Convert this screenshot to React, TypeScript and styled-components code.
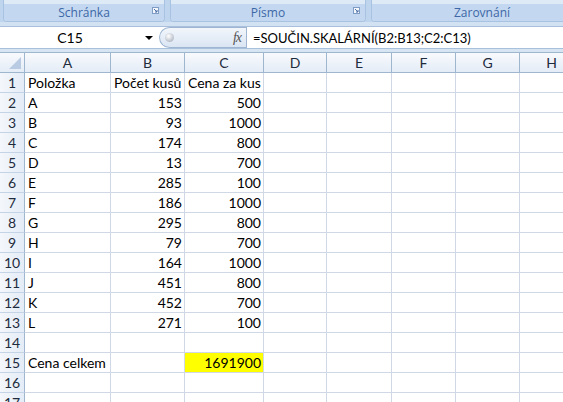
import React from "react";
import styled, { createGlobalStyle } from "styled-components";

const GlobalStyle = createGlobalStyle`
  body {
    margin: 0;
    background: #ffffff;
    font-family: Lato, "Open Sans", "Liberation Sans", sans-serif;
    overflow: hidden;
  }
`;

const columns = [
  { name: "A", width: 86 },
  { name: "B", width: 74 },
  { name: "C", width: 79 },
  { name: "D", width: 63 },
  { name: "E", width: 65 },
  { name: "F", width: 64 },
  { name: "G", width: 64 },
  { name: "H", width: 64 },
];

type Cell = { value: string; num?: boolean; highlight?: boolean };

const data: Record<number, Cell[]> = {
  1: [{ value: "Položka" }, { value: "Počet kusů" }, { value: "Cena za kus" }],
  2: [{ value: "A" }, { value: "153", num: true }, { value: "500", num: true }],
  3: [{ value: "B" }, { value: "93", num: true }, { value: "1000", num: true }],
  4: [{ value: "C" }, { value: "174", num: true }, { value: "800", num: true }],
  5: [{ value: "D" }, { value: "13", num: true }, { value: "700", num: true }],
  6: [{ value: "E" }, { value: "285", num: true }, { value: "100", num: true }],
  7: [{ value: "F" }, { value: "186", num: true }, { value: "1000", num: true }],
  8: [{ value: "G" }, { value: "295", num: true }, { value: "800", num: true }],
  9: [{ value: "H" }, { value: "79", num: true }, { value: "700", num: true }],
  10: [{ value: "I" }, { value: "164", num: true }, { value: "1000", num: true }],
  11: [{ value: "J" }, { value: "451", num: true }, { value: "800", num: true }],
  12: [{ value: "K" }, { value: "452", num: true }, { value: "700", num: true }],
  13: [{ value: "L" }, { value: "271", num: true }, { value: "100", num: true }],
  15: [
    { value: "Cena celkem" },
    { value: "" },
    { value: "1691900", num: true, highlight: true },
  ],
};

const groups = [
  { label: "Schránka", width: 160, launcher: true },
  { label: "Písmo", width: 194, launcher: true },
  { label: "Zarovnání", width: 220, launcher: false },
];

const App = () => {
  const rows = Array.from({ length: 17 }, (_, i) => i + 1);

  return (
    <>
      <GlobalStyle />
      <Ribbon>
        {groups.map((g) => (
          <Group key={g.label} style={{ width: g.width }}>
            <GroupBody />
            <GroupLabel>
              <span>{g.label}</span>
              {g.launcher && (
                <Launcher>
                  <svg width="7" height="7" viewBox="0 0 7 7">
                    <rect x="0.5" y="0.5" width="6" height="6" fill="#f4f7fb" stroke="#7f9cc4" />
                    <path d="M2 2 L5 5 M5 3 L5 5 L3 5" stroke="#4a6ea5" fill="none" />
                  </svg>
                </Launcher>
              )}
            </GroupLabel>
          </Group>
        ))}
      </Ribbon>
      <RibbonEdge />
      <FormulaBar>
        <NameBox>
          <NameText>C15</NameText>
          <DropArrow />
        </NameBox>
        <FxPill>
          <Knob />
          <FxText>fx</FxText>
        </FxPill>
        <FormulaInput>=SOUČIN.SKALÁRNÍ(B2:B13;C2:C13)</FormulaInput>
      </FormulaBar>
      <BarGap />
      <Sheet>
        <HeaderRow>
          <Corner>
            <svg width="14" height="14" viewBox="0 0 14 14">
              <polygon points="13,1 13,13 1,13" fill="#b9cbe3" />
            </svg>
          </Corner>
          {columns.map((c) => (
            <ColHeader key={c.name} style={{ width: c.width }}>
              {c.name}
            </ColHeader>
          ))}
        </HeaderRow>
        {rows.map((r) => (
          <Row key={r}>
            <RowHeader>{r}</RowHeader>
            {columns.map((c, ci) => {
              const cell = data[r]?.[ci];
              return (
                <DataCell
                  key={c.name}
                  style={{ width: c.width }}
                  $num={cell?.num}
                  $highlight={cell?.highlight}
                >
                  {cell?.value}
                </DataCell>
              );
            })}
          </Row>
        ))}
      </Sheet>
    </>
  );
};

const Ribbon = styled.div`
  display: flex;
  gap: 5px;
  height: 22px;
  padding-left: 3px;
  background: #bfd5ee;
`;

const Group = styled.div`
  display: flex;
  flex-direction: column;
  flex-shrink: 0;
  height: 21px;
  border: 1px solid #a8c2e2;
  border-top: none;
  border-radius: 0 0 4px 4px;
  overflow: hidden;
  background: #d6e4f5;
`;

const GroupBody = styled.div`
  height: 6px;
  background: #dfeaf7;
`;

const GroupLabel = styled.div`
  position: relative;
  flex: 1;
  display: flex;
  align-items: center;
  justify-content: center;
  background: #c3d8f0;
  color: #3d67a6;
  font-size: 12px;
  font-family: "Open Sans", "Liberation Sans", sans-serif;
`;

const Launcher = styled.div`
  position: absolute;
  right: 5px;
  top: 3px;
  display: flex;
`;

const RibbonEdge = styled.div`
  height: 4px;
  background: #d3e2f3;
  border-bottom: 1px solid #a9c0dc;
`;

const FormulaBar = styled.div`
  display: flex;
  align-items: stretch;
  height: 21px;
  background: #ffffff;
  border-bottom: 1px solid #a9c0dc;
`;

const NameBox = styled.div`
  position: relative;
  width: 157px;
  display: flex;
  align-items: center;
`;

const NameText = styled.span`
  width: 140px;
  text-align: center;
  font-size: 14px;
  color: #000;
`;

const DropArrow = styled.div`
  position: absolute;
  right: 4px;
  top: 9px;
  width: 0;
  height: 0;
  border-left: 4px solid transparent;
  border-right: 4px solid transparent;
  border-top: 4px solid #000;
`;

const FxPill = styled.div`
  position: relative;
  width: 87px;
  margin-left: 2px;
  border: 1px solid #9fb5d2;
  border-right: none;
  border-radius: 11px 0 0 11px;
  background: linear-gradient(#f2f6fb, #dae5f3);
  display: flex;
  align-items: center;
  justify-content: flex-end;
  padding-right: 5px;
  box-sizing: border-box;
`;

const Knob = styled.div`
  position: absolute;
  left: 5px;
  top: 5px;
  width: 9px;
  height: 9px;
  border-radius: 50%;
  background: radial-gradient(circle at 40% 35%, #ffffff, #9aa4b2);
`;

const FxText = styled.span`
  font-family: "Liberation Serif", serif;
  font-style: italic;
  font-size: 14px;
  color: #555;
  letter-spacing: -1px;
`;

const FormulaInput = styled.div`
  flex: 1;
  display: flex;
  align-items: center;
  padding-left: 6px;
  border-left: 1px solid #9fb5d2;
  font-size: 13px;
  color: #000;
`;

const BarGap = styled.div`
  height: 3px;
  background: #d7e4f2;
  border-bottom: 1px solid #9eb6ce;
`;

const Sheet = styled.div`
  display: flex;
  flex-direction: column;
  white-space: nowrap;
`;

const HeaderRow = styled.div`
  display: flex;
  height: 20px;
`;

const Row = styled.div`
  display: flex;
  height: 20px;
`;

const headerBase = `
  flex-shrink: 0;
  box-sizing: border-box;
  display: flex;
  align-items: center;
  justify-content: center;
  background: linear-gradient(#f8fafd, #e4ecf7);
  border-right: 1px solid #9eb6ce;
  border-bottom: 1px solid #9eb6ce;
  font-size: 14px;
  color: #1e2b3c;
`;

const Corner = styled.div`
  ${headerBase};
  width: 25px;
  justify-content: flex-end;
  align-items: flex-end;
  padding: 0 2px 2px 0;
`;

const ColHeader = styled.div`
  ${headerBase};
`;

const RowHeader = styled.div`
  ${headerBase};
  width: 25px;
  background: linear-gradient(90deg, #f4f7fb, #e4ecf7);
  border-bottom-color: #c5d3e6;
`;

const DataCell = styled.div<{ $num?: boolean; $highlight?: boolean }>`
  flex-shrink: 0;
  box-sizing: border-box;
  display: flex;
  align-items: center;
  justify-content: ${(p) => (p.$num ? "flex-end" : "flex-start")};
  padding: 0 2px 0 3px;
  border-right: 1px solid #d0d7e5;
  border-bottom: 1px solid #d0d7e5;
  background: ${(p) => (p.$highlight ? "#ffff00" : "#ffffff")};
  font-size: 14px;
  color: #000;
`;

export default App;
